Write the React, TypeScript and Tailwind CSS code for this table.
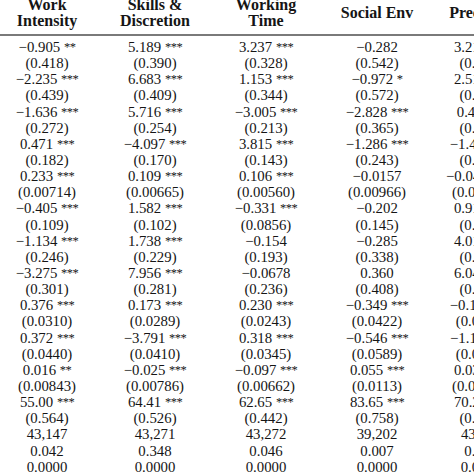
const columns = [
  {
    title: ["Work", "Intensity"],
    width: "w-[108px]",
    rows: [
      "−0.905 **", "(0.418)", "−2.235 ***", "(0.439)", "−1.636 ***", "(0.272)",
      "0.471 ***", "(0.182)", "0.233 ***", "(0.00714)", "−0.405 ***", "(0.109)",
      "−1.134 ***", "(0.246)", "−3.275 ***", "(0.301)", "0.376 ***", "(0.0310)",
      "0.372 ***", "(0.0440)", "0.016 **", "(0.00843)", "55.00 ***", "(0.564)",
      "43,147", "0.042", "0.0000",
    ],
  },
  {
    title: ["Skills &", "Discretion"],
    width: "w-[108px]",
    rows: [
      "5.189 ***", "(0.390)", "6.683 ***", "(0.409)", "5.716 ***", "(0.254)",
      "−4.097 ***", "(0.170)", "0.109 ***", "(0.00665)", "1.582 ***", "(0.102)",
      "1.738 ***", "(0.229)", "7.956 ***", "(0.281)", "0.173 ***", "(0.0289)",
      "−3.791 ***", "(0.0410)", "−0.025 ***", "(0.00786)", "64.41 ***", "(0.526)",
      "43,271", "0.348", "0.0000",
    ],
  },
  {
    title: ["Working", "Time"],
    width: "w-[114px]",
    rows: [
      "3.237 ***", "(0.328)", "1.153 ***", "(0.344)", "−3.005 ***", "(0.213)",
      "3.815 ***", "(0.143)", "0.106 ***", "(0.00560)", "−0.331 ***", "(0.0856)",
      "−0.154", "(0.193)", "−0.0678", "(0.236)", "0.230 ***", "(0.0243)",
      "0.318 ***", "(0.0345)", "−0.097 ***", "(0.00662)", "62.65 ***", "(0.442)",
      "43,272", "0.046", "0.0000",
    ],
  },
  {
    title: ["Social Env"],
    width: "w-[108px]",
    rows: [
      "−0.282", "(0.542)", "−0.972 *", "(0.572)", "−2.828 ***", "(0.365)",
      "−1.286 ***", "(0.243)", "−0.0157", "(0.00966)", "−0.202", "(0.145)",
      "−0.285", "(0.338)", "0.360", "(0.408)", "−0.349 ***", "(0.0422)",
      "−0.546 ***", "(0.0589)", "0.055 ***", "(0.0113)", "83.65 ***", "(0.758)",
      "39,202", "0.007", "0.0000",
    ],
  },
  {
    title: ["Precarity"],
    width: "w-[100px]",
    rows: [
      "3.214 ***", "(0.412)", "2.517 ***", "(0.433)", "0.498 **", "(0.268)",
      "−1.402 ***", "(0.179)", "−0.0412 ***", "(0.00702)", "0.914 ***", "(0.107)",
      "4.012 ***", "(0.242)", "6.043 ***", "(0.296)", "−0.152 ***", "(0.0305)",
      "−1.112 ***", "(0.0433)", "0.031 ***", "(0.00829)", "70.28 ***", "(0.555)",
      "43,118", "0.061", "0.0000",
    ],
  },
];

function Cell({ text }: { text: string }) {
  // split off significance stars so they render smaller and raised
  const m = text.match(/^(.*?) (\*+)$/);
  if (!m) return <div className="h-[16.15px]">{text}</div>;
  return (
    <div className="h-[16.15px]">
      {m[1]}{" "}
      <span className="relative top-[-1px] text-[12.5px] leading-[0] tracking-[-0.5px]">{m[2]}</span>
    </div>
  );
}

export default function App() {
  return (
    <div className="w-[474px] h-[474px] overflow-hidden bg-white text-[#151515] font-['Liberation_Serif',serif]">
      <div className="flex ml-[-7px] w-max">
        {columns.map((col) => (
          <div key={col.title.join(" ")} className={`${col.width} flex flex-col shrink-0`}>
            <div className="h-[37px] mt-[-3px] pb-[5px] flex items-center justify-center text-center font-bold text-[16px] leading-[16.5px]">
              <div>
                {col.title.map((t) => (
                  <div key={t}>{t}</div>
                ))}
              </div>
            </div>
          </div>
        ))}
      </div>
      <div className="h-[2px] bg-[#7a7a7a]" />
      <div className="flex ml-[-7px] w-max pt-[3px]">
        {columns.map((col) => (
          <div key={col.title.join(" ")} className={`${col.width} shrink-0 text-center text-[14.8px] leading-[16.15px]`}>
            {col.rows.map((r, i) => (
              <Cell key={i} text={r} />
            ))}
          </div>
        ))}
      </div>
    </div>
  );
}
